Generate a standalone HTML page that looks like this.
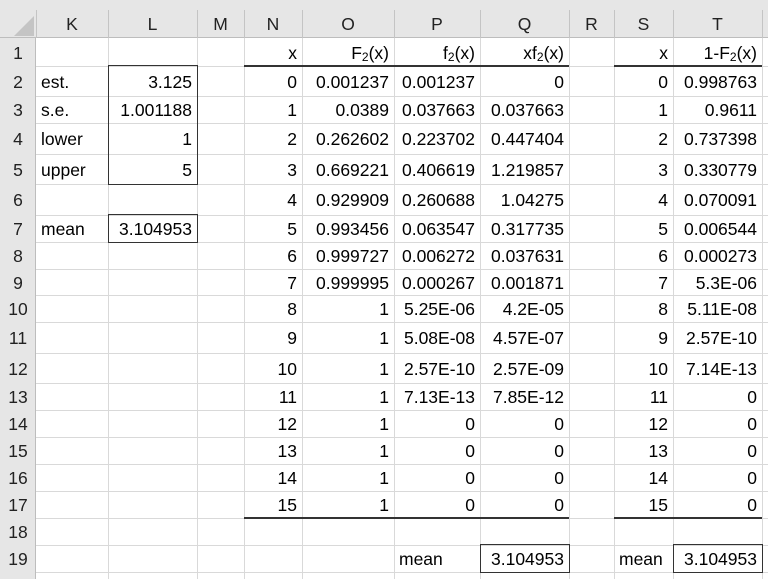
<!DOCTYPE html><html><head><style>
body{margin:0;width:768px;height:579px;overflow:hidden;background:#fff;font-family:"Liberation Sans",sans-serif;font-size:17.5px;color:#000;position:relative}
.hd{position:absolute;left:0;top:0;width:768px;height:38px;background:#e6e6e6;border-bottom:1px solid #bdbdbd;box-sizing:border-box}
.rh{position:absolute;left:0;top:38px;width:36px;height:541px;background:#e6e6e6;border-right:1px solid #bdbdbd;box-sizing:border-box}
.hl{position:absolute;left:36px;width:732px;height:1px;background:#d9d9d9}
.vl{position:absolute;top:38px;width:1px;height:541px;background:#d9d9d9}
.hv{position:absolute;top:10px;width:1px;height:28px;background:#c4c4c4}
.r{position:absolute;left:0;width:768px}
.r span{position:absolute;top:0;height:100%;display:flex;align-items:center;justify-content:flex-end;box-sizing:border-box;padding:2px 5px 0 0;white-space:nowrap}
.r span.t{justify-content:flex-start;padding-left:5px}
.n0{left:0;width:36px;justify-content:center!important;padding:2px 0 0 0!important;color:#222}
.K{left:36px;width:72px}.L{left:108px;width:89px}.N{left:244px;width:58px}.O{left:302px;width:92px}.P{left:394px;width:86px}.Q{left:480px;width:89px}.S{left:614px;width:59px}.T{left:673px;width:89px}
.h span{justify-content:center!important;padding:0!important;color:#222;top:10px;height:28px}
sub{font-size:12px;position:relative;top:4px}
.bx{position:absolute;border:1.5px solid #333;box-sizing:border-box}
.ln{position:absolute;height:1.5px;background:#333}
</style></head><body>
<div class="hd"></div><div class="rh"></div>
<div class="hl" style="top:66px"></div><div class="hl" style="top:96px"></div><div class="hl" style="top:123px"></div><div class="hl" style="top:154px"></div><div class="hl" style="top:184px"></div><div class="hl" style="top:215px"></div><div class="hl" style="top:242px"></div><div class="hl" style="top:269px"></div><div class="hl" style="top:295px"></div><div class="hl" style="top:322px"></div><div class="hl" style="top:353px"></div><div class="hl" style="top:383px"></div><div class="hl" style="top:410px"></div><div class="hl" style="top:437px"></div><div class="hl" style="top:464px"></div><div class="hl" style="top:491px"></div><div class="hl" style="top:518px"></div><div class="hl" style="top:545px"></div><div class="hl" style="top:572px"></div>
<div class="vl" style="left:108px"></div><div class="vl" style="left:197px"></div><div class="vl" style="left:244px"></div><div class="vl" style="left:302px"></div><div class="vl" style="left:394px"></div><div class="vl" style="left:480px"></div><div class="vl" style="left:569px"></div><div class="vl" style="left:614px"></div><div class="vl" style="left:673px"></div><div class="vl" style="left:762px"></div>
<div class="hv" style="left:36px"></div><div class="hv" style="left:108px"></div><div class="hv" style="left:197px"></div><div class="hv" style="left:244px"></div><div class="hv" style="left:302px"></div><div class="hv" style="left:394px"></div><div class="hv" style="left:480px"></div><div class="hv" style="left:569px"></div><div class="hv" style="left:614px"></div><div class="hv" style="left:673px"></div><div class="hv" style="left:762px"></div>
<svg style="position:absolute;left:14px;top:16px" width="20" height="20"><polygon points="20,0 20,20 0,20" fill="#c4c4c4"/></svg>
<div class="r h" style="top:0;height:38px"><span class="K">K</span><span class="L">L</span><span style="left:197px;width:47px">M</span><span class="N">N</span><span class="O">O</span><span class="P">P</span><span class="Q">Q</span><span style="left:569px;width:45px">R</span><span class="S">S</span><span class="T">T</span></div>
<div class="r" style="top:38px;height:28px"><span class="n0">1</span><span class="N">x</span><span class="O">F<sub>2</sub>(x)</span><span class="P">f<sub>2</sub>(x)</span><span class="Q">xf<sub>2</sub>(x)</span><span class="S">x</span><span class="T">1-F<sub>2</sub>(x)</span></div>
<div class="r" style="top:66px;height:30px"><span class="n0">2</span><span class="K t">est.</span><span class="L">3.125</span><span class="N">0</span><span class="O">0.001237</span><span class="P">0.001237</span><span class="Q">0</span><span class="S">0</span><span class="T">0.998763</span></div>
<div class="r" style="top:96px;height:27px"><span class="n0">3</span><span class="K t">s.e.</span><span class="L">1.001188</span><span class="N">1</span><span class="O">0.0389</span><span class="P">0.037663</span><span class="Q">0.037663</span><span class="S">1</span><span class="T">0.9611</span></div>
<div class="r" style="top:123px;height:31px"><span class="n0">4</span><span class="K t">lower</span><span class="L">1</span><span class="N">2</span><span class="O">0.262602</span><span class="P">0.223702</span><span class="Q">0.447404</span><span class="S">2</span><span class="T">0.737398</span></div>
<div class="r" style="top:154px;height:30px"><span class="n0">5</span><span class="K t">upper</span><span class="L">5</span><span class="N">3</span><span class="O">0.669221</span><span class="P">0.406619</span><span class="Q">1.219857</span><span class="S">3</span><span class="T">0.330779</span></div>
<div class="r" style="top:184px;height:31px"><span class="n0">6</span><span class="N">4</span><span class="O">0.929909</span><span class="P">0.260688</span><span class="Q">1.04275</span><span class="S">4</span><span class="T">0.070091</span></div>
<div class="r" style="top:215px;height:27px"><span class="n0">7</span><span class="K t">mean</span><span class="L">3.104953</span><span class="N">5</span><span class="O">0.993456</span><span class="P">0.063547</span><span class="Q">0.317735</span><span class="S">5</span><span class="T">0.006544</span></div>
<div class="r" style="top:242px;height:27px"><span class="n0">8</span><span class="N">6</span><span class="O">0.999727</span><span class="P">0.006272</span><span class="Q">0.037631</span><span class="S">6</span><span class="T">0.000273</span></div>
<div class="r" style="top:269px;height:26px"><span class="n0">9</span><span class="N">7</span><span class="O">0.999995</span><span class="P">0.000267</span><span class="Q">0.001871</span><span class="S">7</span><span class="T">5.3E-06</span></div>
<div class="r" style="top:295px;height:27px"><span class="n0">10</span><span class="N">8</span><span class="O">1</span><span class="P">5.25E-06</span><span class="Q">4.2E-05</span><span class="S">8</span><span class="T">5.11E-08</span></div>
<div class="r" style="top:322px;height:31px"><span class="n0">11</span><span class="N">9</span><span class="O">1</span><span class="P">5.08E-08</span><span class="Q">4.57E-07</span><span class="S">9</span><span class="T">2.57E-10</span></div>
<div class="r" style="top:353px;height:30px"><span class="n0">12</span><span class="N">10</span><span class="O">1</span><span class="P">2.57E-10</span><span class="Q">2.57E-09</span><span class="S">10</span><span class="T">7.14E-13</span></div>
<div class="r" style="top:383px;height:27px"><span class="n0">13</span><span class="N">11</span><span class="O">1</span><span class="P">7.13E-13</span><span class="Q">7.85E-12</span><span class="S">11</span><span class="T">0</span></div>
<div class="r" style="top:410px;height:27px"><span class="n0">14</span><span class="N">12</span><span class="O">1</span><span class="P">0</span><span class="Q">0</span><span class="S">12</span><span class="T">0</span></div>
<div class="r" style="top:437px;height:27px"><span class="n0">15</span><span class="N">13</span><span class="O">1</span><span class="P">0</span><span class="Q">0</span><span class="S">13</span><span class="T">0</span></div>
<div class="r" style="top:464px;height:27px"><span class="n0">16</span><span class="N">14</span><span class="O">1</span><span class="P">0</span><span class="Q">0</span><span class="S">14</span><span class="T">0</span></div>
<div class="r" style="top:491px;height:27px"><span class="n0">17</span><span class="N">15</span><span class="O">1</span><span class="P">0</span><span class="Q">0</span><span class="S">15</span><span class="T">0</span></div>
<div class="r" style="top:518px;height:27px"><span class="n0">18</span></div>
<div class="r" style="top:545px;height:27px"><span class="n0">19</span><span class="P t">mean</span><span class="Q">3.104953</span><span class="S t">mean</span><span class="T">3.104953</span></div>
<div class="ln" style="left:244px;width:325px;top:65px"></div><div class="ln" style="left:614px;width:148px;top:65px"></div>
<div class="ln" style="left:244px;width:325px;top:517px"></div><div class="ln" style="left:614px;width:148px;top:517px"></div>
<div class="bx" style="left:108px;top:65px;width:90px;height:120px"></div>
<div class="bx" style="left:108px;top:214px;width:90px;height:29px"></div>
<div class="bx" style="left:480px;top:544px;width:90px;height:29px"></div>
<div class="bx" style="left:673px;top:544px;width:90px;height:29px"></div>
</body></html>
